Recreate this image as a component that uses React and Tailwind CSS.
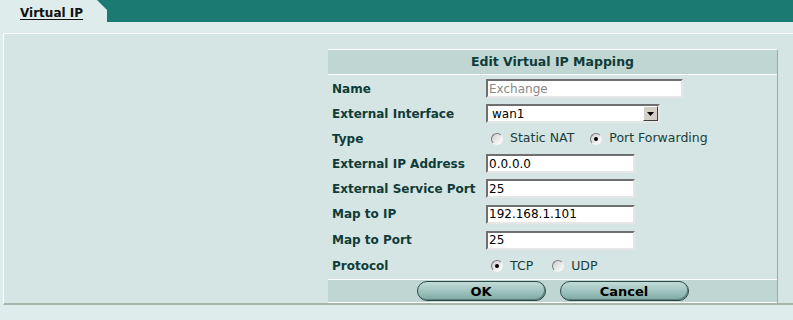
import React from "react";

const labelCls = "pl-[4px] w-[158px] shrink-0 text-[12px] font-bold text-[#0f3b38]";
const boxCls =
  "h-[19px] bg-white border-2 border-t-[#6f6f6f] border-l-[#6f6f6f] border-b-[#e6e6e6] border-r-[#e6e6e6] flex items-center px-[1px] text-[12px] leading-none";

const Radio = ({ checked }) => (
  <span className="relative inline-flex h-[12px] w-[12px] shrink-0 items-center justify-center rounded-full border border-t-[#7a7a7a] border-l-[#7a7a7a] border-b-[#f4f4f4] border-r-[#f4f4f4] bg-gradient-to-br from-[#d0d0d0] to-[#ffffff]">
    {checked && <span className="h-[4px] w-[4px] rounded-full bg-black" />}
  </span>
);

const Row = ({ label, h = "h-[25px]", children }) => (
  <div className={`flex items-center ${h}`}>
    <div className={labelCls}>{label}</div>
    <div className="flex items-center">{children}</div>
  </div>
);

const Button = ({ children }) => (
  <button
    type="button"
    className="h-[20px] w-[129px] rounded-full border border-[#2c4a45] bg-gradient-to-b from-[#c3dcd8] via-[#9fc4bf] to-[#7fa9a3] text-[13px] font-bold leading-none text-black shadow-[inset_-1px_-1px_0_#5b807a]"
  >
    {children}
  </button>
);

export default function App() {
  return (
    <div className="h-[320px] w-full overflow-hidden bg-[#dfecec] font-['DejaVu_Sans',Verdana,sans-serif]">
      {/* top bar */}
      <div className="relative h-[22px] bg-[#1b7a72]">
        <div className="absolute left-0 top-0 h-[22px] w-[107px] bg-[#dfecec] [clip-path:polygon(0_0,97px_0,107px_10px,107px_100%,0_100%)]">
          <span className="ml-[20px] inline-block pt-[4px] text-[12px] font-bold leading-none text-[#111] underline underline-offset-2">
            Virtual IP
          </span>
        </div>
      </div>

      <div className="h-[11px]" />

      {/* outer panel */}
      <div className="ml-[3px] border-l border-t border-b-2 border-l-white border-t-white border-b-[#a7b4aa] bg-[#d5e5e3] pl-[324px] pt-[15px]">
        <div className="w-[450px] border-r border-t border-r-[#9aaaa6] border-t-white">
          <div className="flex h-[25px] items-center justify-center border-b border-b-white bg-[#c0d6d3] pt-[1px] text-[12.5px] font-bold text-[#0f3b38]">
            Edit Virtual IP Mapping
          </div>

          <div className="pt-[1px]">
            <Row label="Name">
              <div className={`${boxCls} w-[197px] text-[#8a8a8a]`}>Exchange</div>
            </Row>
            <Row label="External Interface">
              <div className={`${boxCls} w-[174px] justify-between pr-0 text-black`}>
                <span className="pl-[3px]">wan1</span>
                <span className="flex h-[15px] w-[15px] items-center justify-center border border-t-white border-l-white border-b-[#404040] border-r-[#404040] bg-[#d4d0c8]">
                  <svg width="7" height="4" viewBox="0 0 7 4">
                    <polygon points="0,0 7,0 3.5,4" fill="#000" />
                  </svg>
                </span>
              </div>
            </Row>
            <Row label="Type">
              <div className="flex items-center pl-[5px] text-[12.5px] text-[#1a3d3a]">
                <Radio />
                <span className="ml-[7px]">Static NAT</span>
                <span className="ml-[16px]" />
                <Radio checked />
                <span className="ml-[7px]">Port Forwarding</span>
              </div>
            </Row>
            <Row label="External IP Address">
              <div className={`${boxCls} w-[149px] text-black`}>0.0.0.0</div>
            </Row>
            <Row label="External Service Port">
              <div className={`${boxCls} w-[149px] text-black`}>25</div>
            </Row>
            <Row label="Map to IP" h="h-[26px]">
              <div className={`${boxCls} w-[149px] text-black`}>192.168.1.101</div>
            </Row>
            <Row label="Map to Port" h="h-[26px]">
              <div className={`${boxCls} w-[149px] text-black`}>25</div>
            </Row>
            <Row label="Protocol" h="h-[26px]">
              <div className="flex items-center pl-[5px] text-[12.5px] text-[#1a3d3a]">
                <Radio checked />
                <span className="ml-[7px]">TCP</span>
                <span className="ml-[19px]" />
                <Radio />
                <span className="ml-[7px]">UDP</span>
              </div>
            </Row>
          </div>

          <div className="flex h-[24px] items-center justify-center gap-[14px] border-b border-t border-b-white border-t-white bg-[#c0d6d3]">
            <Button>OK</Button>
            <Button>Cancel</Button>
          </div>
        </div>
      </div>
    </div>
  );
}
